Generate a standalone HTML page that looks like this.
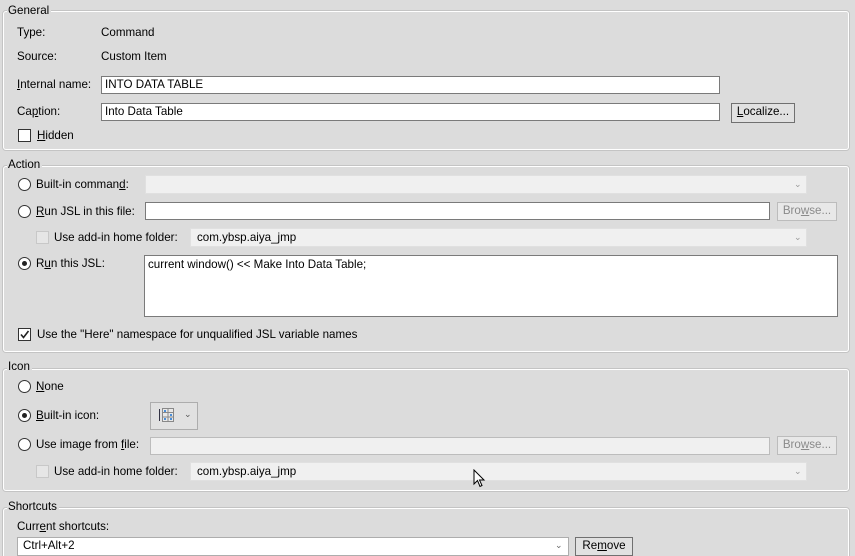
<!DOCTYPE html>
<html><head><meta charset="utf-8"><style>
*{box-sizing:border-box;margin:0;padding:0}
html,body{width:855px;height:556px;overflow:hidden}
body{background:#dcdcdc;font-family:"Liberation Sans",sans-serif;font-size:11.6px;color:#000;position:relative}
.a{position:absolute;white-space:nowrap;line-height:14px}
.fr{position:absolute;border:1px solid #fff;box-shadow:0 0 0 1px #c4c4c4;border-radius:3px}
.lg{position:absolute;background:#dcdcdc;padding:0 2px 0 1px;line-height:14px}
.in{position:absolute;background:#fff;border:1px solid #7a7a7a;padding:1px 3px;line-height:14px;white-space:nowrap}
.dis{position:absolute;background:#f0f0f0;border:1px solid #e0e0e0}
.din{position:absolute;background:#f0f0f0;border:1px solid #bcbcbc}
.btn{position:absolute;border:1px solid #707070;background:#e1e1e1;text-align:center;line-height:16px}
.bd{position:absolute;border:1px solid #bcbcbc;background:#e8e8e8;color:#8a8a8a;text-align:center;line-height:16px}
.rd{position:absolute;width:13px;height:13px;border:1px solid #333;border-radius:50%;background:#fff}
.rd.on::after{content:"";position:absolute;left:3px;top:3px;width:5px;height:5px;border-radius:50%;background:#222}
.cb{position:absolute;width:13px;height:13px;border:1px solid #333;background:#fff}
.cb.d{border-color:#c8c8c8;background:#e6e6e6}
.chev{position:absolute;color:#999;font-size:9px}
u{text-decoration:underline}
</style></head><body>
<div class="fr" style="left:3px;top:11px;width:846px;height:139px"></div>
<div class="lg" style="left:7px;top:4px">General</div>
<div class="a" style="left:17px;top:26px">Type:</div>
<div class="a" style="left:101px;top:26px">Command</div>
<div class="a" style="left:17px;top:50px">Source:</div>
<div class="a" style="left:101px;top:50px">Custom Item</div>
<div class="a" style="left:17px;top:78px"><u>I</u>nternal name:</div>
<div class="in" style="left:101px;top:76px;width:619px;height:18px">INTO DATA TABLE</div>
<div class="a" style="left:17px;top:105px">Ca<u>p</u>tion:</div>
<div class="in" style="left:101px;top:103px;width:619px;height:18px">Into Data Table</div>
<div class="btn" style="left:731px;top:103px;width:64px;height:20px"><u>L</u>ocalize...</div>
<div class="cb" style="left:18px;top:129px"></div>
<div class="a" style="left:37px;top:129px"><u>H</u>idden</div>

<div class="fr" style="left:3px;top:166px;width:846px;height:186px"></div>
<div class="lg" style="left:7px;top:158px">Action</div>
<div class="rd" style="left:18px;top:178px"></div>
<div class="a" style="left:36px;top:178px">Built-in comman<u>d</u>:</div>
<div class="dis" style="left:145px;top:175px;width:662px;height:19px"></div><div class="chev" style="left:794px;top:179px">&#8964;</div>
<div class="rd" style="left:18px;top:205px"></div>
<div class="a" style="left:36px;top:205px"><u>R</u>un JSL in this file:</div>
<div class="in" style="left:145px;top:202px;width:625px;height:18px"></div>
<div class="bd" style="left:777px;top:202px;width:60px;height:19px">Bro<u>w</u>se...</div>
<div class="cb d" style="left:36px;top:231px"></div>
<div class="a" style="left:54px;top:231px">Use add-in home folder:</div>
<div class="dis" style="left:190px;top:228px;width:617px;height:19px"></div>
<div class="a" style="left:197px;top:231px">com.ybsp.aiya_jmp</div><div class="chev" style="left:794px;top:232px">&#8964;</div>
<div class="rd on" style="left:18px;top:257px"></div>
<div class="a" style="left:36px;top:257px">R<u>u</u>n this JSL:</div>
<div class="in" style="left:144px;top:255px;width:694px;height:62px;padding:2px 3px">current window() &lt;&lt; Make Into Data Table;</div>
<div class="cb" style="left:18px;top:328px"><svg width="11" height="11" style="position:absolute;left:0;top:0"><path d="M2 5.5 L4.5 8.5 L9.5 2" fill="none" stroke="#222" stroke-width="1.6"/></svg></div>
<div class="a" style="left:37px;top:328px">Use the "Here" namespace for unqualified JSL variable names</div>

<div class="fr" style="left:3px;top:369px;width:846px;height:122px"></div>
<div class="lg" style="left:7px;top:360px">Icon</div>
<div class="rd" style="left:18px;top:380px"></div>
<div class="a" style="left:36px;top:380px"><u>N</u>one</div>
<div class="rd on" style="left:18px;top:409px"></div>
<div class="a" style="left:36px;top:409px"><u>B</u>uilt-in icon:</div>
<div style="position:absolute;left:150px;top:402px;width:48px;height:28px;border:1px solid #adadad;background:#e1e1e1"></div>
<svg style="position:absolute;left:159px;top:407px" width="16" height="16"><rect x="3.5" y="1.5" width="11" height="13" fill="#e8e8e8" stroke="#888"/><path d="M3.5 5.5H14.5M3.5 10H14.5M9 1.5V14.5" stroke="#888"/><rect x="5" y="3" width="2" height="2" fill="#4a8ed8"/><rect x="11" y="7" width="2" height="2" fill="#4a8ed8"/><rect x="5" y="11" width="2" height="2" fill="#4a8ed8"/><rect x="11" y="11" width="2" height="2" fill="#4a8ed8"/><path d="M0.5 2V14" stroke="#334" stroke-width="1"/></svg>
<div class="chev" style="left:184px;top:409px;color:#555">&#8964;</div>
<div class="rd" style="left:18px;top:438px"></div>
<div class="a" style="left:36px;top:438px">Use image from <u>f</u>ile:</div>
<div class="din" style="left:150px;top:437px;width:620px;height:18px"></div>
<div class="bd" style="left:777px;top:436px;width:60px;height:19px">Bro<u>w</u>se...</div>
<div class="cb d" style="left:36px;top:465px"></div>
<div class="a" style="left:54px;top:465px">Use add-in home folder:</div>
<div class="dis" style="left:190px;top:462px;width:617px;height:19px"></div>
<div class="a" style="left:197px;top:465px">com.ybsp.aiya_jmp</div><div class="chev" style="left:794px;top:466px">&#8964;</div>
<svg style="position:absolute;left:473px;top:469px" width="14" height="20"><path d="M1 1V15L4.5 11.5L7 17.5L9 16.5L6.5 11H11Z" fill="#fff" stroke="#000" stroke-width="1"/></svg>

<div class="fr" style="left:3px;top:508px;width:846px;height:60px"></div>
<div class="lg" style="left:7px;top:500px">Shortcuts</div>
<div class="a" style="left:17px;top:520px">Curr<u>e</u>nt shortcuts:</div>
<div class="in" style="left:17px;top:537px;width:552px;height:19px;border-color:#adadad;padding-left:5px">Ctrl+Alt+2</div>
<div class="chev" style="left:555px;top:540px;color:#666">&#8964;</div>
<div class="btn" style="left:575px;top:537px;width:58px;height:19px">Re<u>m</u>ove</div>
</body></html>
